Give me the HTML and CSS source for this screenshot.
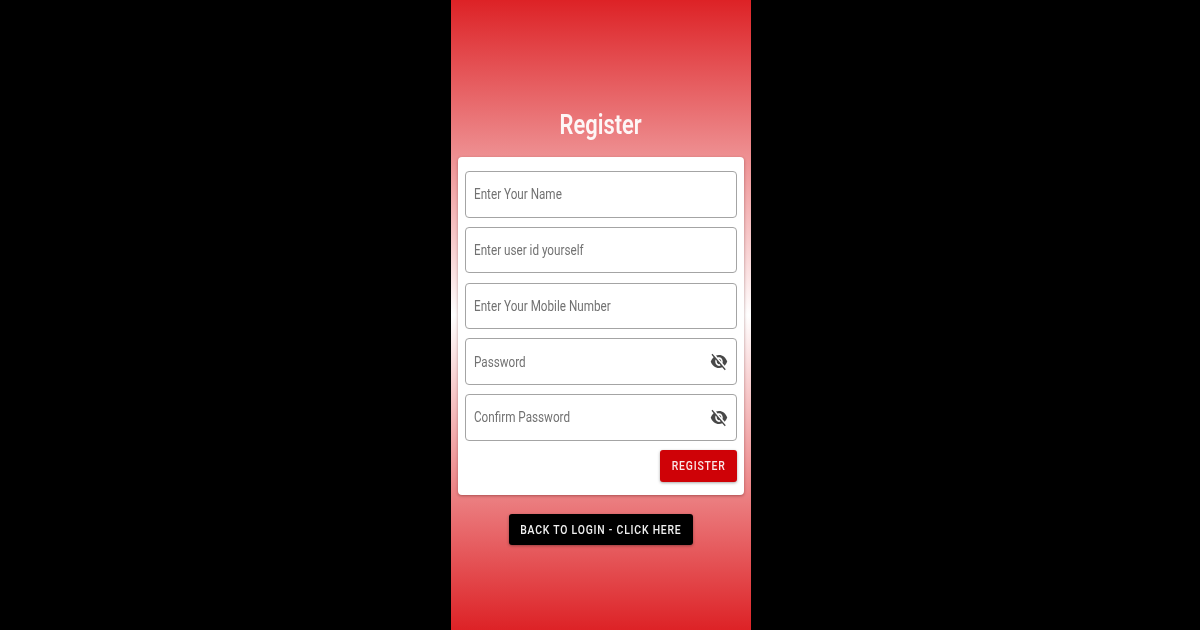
FILE: index.html
```html
<!DOCTYPE html>
<html lang="en">
<head>
    <meta charset="UTF-8">
    <title>Register</title>
    <link rel="stylesheet" href="styles.css">
</head>
<body>

<div class="phone">
    <h1 class="title"><span class="squeeze">Register</span></h1>

    <div class="card">
        <div class="field"><span class="hint">Enter Your Name</span></div>
        <div class="field"><span class="hint">Enter user id yourself</span></div>
        <div class="field"><span class="hint">Enter Your Mobile Number</span></div>
        <div class="field">
            <span class="hint">Password</span>
            <svg class="eye" viewBox="0 0 24 24" preserveAspectRatio="none"><path d="M12 7c2.76 0 5 2.24 5 5 0 .65-.13 1.26-.36 1.83l2.92 2.92c1.51-1.26 2.7-2.89 3.43-4.75-1.73-4.39-6-7.5-11-7.5-1.4 0-2.74.25-3.98.7l2.16 2.16C10.74 7.13 11.35 7 12 7zM2 4.27l2.28 2.28.46.46C3.08 8.3 1.78 10.02 1 12c1.73 4.39 6 7.5 11 7.5 1.55 0 3.03-.3 4.38-.84l.42.42L19.73 22 21 20.73 3.27 3 2 4.27zM7.53 9.8l1.55 1.55c-.05.21-.08.43-.08.65 0 1.66 1.34 3 3 3 .22 0 .44-.03.65-.08l1.55 1.55c-.67.33-1.41.53-2.2.53-2.76 0-5-2.24-5-5 0-.79.2-1.53.53-2.2zm4.31-.78l3.15 3.15.02-.16c0-1.66-1.34-3-3-3l-.17.01z"/></svg>
        </div>
        <div class="field">
            <span class="hint">Confirm Password</span>
            <svg class="eye" viewBox="0 0 24 24" preserveAspectRatio="none"><path d="M12 7c2.76 0 5 2.24 5 5 0 .65-.13 1.26-.36 1.83l2.92 2.92c1.51-1.26 2.7-2.89 3.43-4.75-1.73-4.39-6-7.5-11-7.5-1.4 0-2.74.25-3.98.7l2.16 2.16C10.74 7.13 11.35 7 12 7zM2 4.27l2.28 2.28.46.46C3.08 8.3 1.78 10.02 1 12c1.73 4.39 6 7.5 11 7.5 1.55 0 3.03-.3 4.38-.84l.42.42L19.73 22 21 20.73 3.27 3 2 4.27zM7.53 9.8l1.55 1.55c-.05.21-.08.43-.08.65 0 1.66 1.34 3 3 3 .22 0 .44-.03.65-.08l1.55 1.55c-.67.33-1.41.53-2.2.53-2.76 0-5-2.24-5-5 0-.79.2-1.53.53-2.2zm4.31-.78l3.15 3.15.02-.16c0-1.66-1.34-3-3-3l-.17.01z"/></svg>
        </div>
        <div class="actions">
            <div class="btn btn-red"><span class="squeeze">REGISTER</span></div>
        </div>
    </div>

    <div class="btn btn-black"><span class="squeeze">BACK TO LOGIN - CLICK HERE</span></div>
</div>

</body>
</html>
```

FILE: styles.css
```css
* {
  box-sizing: border-box;
}
html, body {
  height: 100%;
}
body {
  margin: 0;
  background-color: #000;
  display: flex;
  justify-content: center;
  font-family: Roboto, "Liberation Sans", sans-serif;
  overflow: hidden;
}
.phone {
  width: 300px;
  height: 630px;
  margin-left: 2px;
  padding: 110px 7px 0;
  display: flex;
  flex-direction: column;
  align-items: center;
  background: linear-gradient(to bottom, #dd2226 0%, #ffffff 50%, #dd2226 100%);
  filter: blur(0.4px);
}
.squeeze {
  display: inline-block;
  transform: scaleX(0.8);
  white-space: nowrap;
}
.title {
  margin: 0;
  height: 47px;
  line-height: 30px;
  font-size: 27px;
  font-weight: 600;
  color: #fdf6f6;
}
.title .squeeze {
  transform: scaleX(0.81);
}
.card {
  width: 286px;
  height: 338px;
  padding: 14px 7px 0;
  background: #fff;
  border-radius: 4px;
  box-shadow: 0 1px 3px rgba(90, 20, 20, 0.45);
  display: flex;
  flex-direction: column;
  gap: 9.3px;
}
.field {
  height: 46.5px;
  flex-shrink: 0;
  padding: 0 8px;
  border: 1px solid #a4a4a4;
  border-radius: 4px;
  display: flex;
  align-items: center;
  justify-content: space-between;
}
.hint {
  font-size: 15px;
  color: #727272;
  transform: scaleX(0.78);
  transform-origin: left center;
  white-space: nowrap;
}
.eye {
  width: 18px;
  height: 21px;
  fill: #484848;
}
.actions {
  display: flex;
  justify-content: flex-end;
}
.btn {
  display: flex;
  align-items: center;
  justify-content: center;
  border-radius: 3px;
  color: #fff;
  font-size: 13px;
  font-weight: 500;
  letter-spacing: 1px;
  box-shadow: 0 1px 3px rgba(0, 0, 0, 0.35);
}
.btn-red {
  width: 77px;
  height: 32px;
  background: #cf0207;
  color: #fae6e6;
}
.btn-black {
  width: 184px;
  height: 31px;
  margin-top: 19px;
  background: #000;
  color: #f0f0f0;
}
```
